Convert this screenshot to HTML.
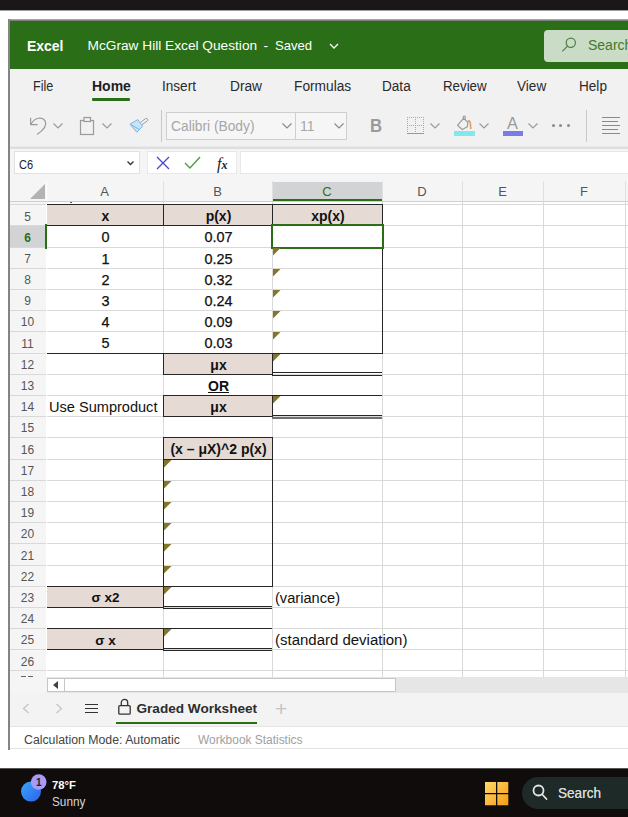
<!DOCTYPE html>
<html lang="en"><head><meta charset="utf-8"><title>Excel</title>
<style>
html,body{margin:0;padding:0;}
body{width:628px;height:817px;position:relative;overflow:hidden;background:#fff;font-family:"Liberation Sans",sans-serif;color:#222;}
.a{position:absolute;}
.t{position:absolute;white-space:nowrap;line-height:1;transform-origin:0 0;}
.c{position:absolute;white-space:nowrap;line-height:1;text-align:center;}
</style></head><body>

<div class="a" style="left:0px;top:0px;width:628px;height:10px;background:#1b1718;"></div>
<div class="a" style="left:0px;top:10px;width:628px;height:1px;background:#a3a1a2;"></div>
<div class="a" style="left:8px;top:19px;width:620px;height:731px;background:#858385;"></div>
<div class="a" style="left:10px;top:21px;width:618px;height:729px;background:#fff;"></div>
<div class="a" style="left:10px;top:21px;width:618px;height:48px;background:#2a6f17;"></div>
<div class="a" style="left:10px;top:19px;width:618px;height:1px;background:#a6a6a6;"></div>
<div class="a" style="left:10px;top:20px;width:618px;height:1px;background:#7d807b;"></div>
<div class="t" style="left:26.5px;top:38px;font-size:15.5px;color:#fff;font-weight:bold;transform:scaleX(0.9);">Excel</div>
<div class="t" style="left:87.5px;top:39px;font-size:13.7px;color:#fff;">McGraw Hill Excel Question</div>
<div class="t" style="left:263.5px;top:39px;font-size:13.7px;color:#fff;">-</div>
<div class="t" style="left:275px;top:39px;font-size:13.5px;color:#fff;transform:scaleX(0.97);">Saved</div>
<svg class="a" style="left:328px;top:42px" width="12" height="8" viewBox="0 0 12 8"><path d="M2 2 L6 6 L10 2" fill="none" stroke="#fff" stroke-width="1.3"/></svg>
<div class="a" style="left:543.5px;top:29.5px;width:95px;height:32px;background:#cbdcc6;border-radius:4px;"></div>
<svg class="a" style="left:560px;top:36px" width="18" height="18" viewBox="0 0 18 18"><circle cx="10.8" cy="6.8" r="4.6" fill="none" stroke="#4f7d40" stroke-width="1.2"/><path d="M7.5 10.2 L2.3 15.4" stroke="#4f7d40" stroke-width="1.2"/></svg>
<div class="t" style="left:588px;top:38px;font-size:14px;color:#3f7a2a;">Search</div>
<div class="a" style="left:10px;top:69px;width:618px;height:80px;background:#f1f1f2;"></div>
<div class="t" style="left:33px;top:79px;font-size:14px;color:#2a2a2a;transform:scaleX(0.9);">File</div>
<div class="t" style="left:92px;top:79px;font-size:14px;color:#1e1e1e;font-weight:bold;">Home</div>
<div class="t" style="left:162px;top:79px;font-size:14px;color:#2a2a2a;transform:scaleX(0.97);">Insert</div>
<div class="t" style="left:229.5px;top:79px;font-size:14px;color:#2a2a2a;transform:scaleX(0.98);">Draw</div>
<div class="t" style="left:293.5px;top:79px;font-size:14px;color:#2a2a2a;transform:scaleX(0.98);">Formulas</div>
<div class="t" style="left:382px;top:79px;font-size:14px;color:#2a2a2a;transform:scaleX(0.97);">Data</div>
<div class="t" style="left:443px;top:79px;font-size:14px;color:#2a2a2a;transform:scaleX(0.95);">Review</div>
<div class="t" style="left:517px;top:79px;font-size:14px;color:#2a2a2a;transform:scaleX(0.97);">View</div>
<div class="t" style="left:579px;top:79px;font-size:14px;color:#2a2a2a;transform:scaleX(0.97);">Help</div>
<div class="a" style="left:92px;top:97.5px;width:38px;height:3px;background:#2a6f17;border-radius:1px;"></div>
<svg class="a" style="left:28px;top:114px" width="22" height="24" viewBox="0 0 22 24"><path d="M2.6 3.8 L2.6 10.6 L9.6 10.6" fill="none" stroke="#9a9a9a" stroke-width="1.2"/><path d="M3 10.2 C6.5 3.4 14.5 2 17.3 7.4 C19.5 12 14 17 9 20.5" fill="none" stroke="#9a9a9a" stroke-width="1.2"/></svg>
<svg class="a" style="left:52px;top:122px" width="12" height="8" viewBox="0 0 12 8"><path d="M1.5 1.5 L6 6 L10.5 1.5" fill="none" stroke="#9a9a9a" stroke-width="1.2"/></svg>
<svg class="a" style="left:78px;top:115px" width="18" height="22" viewBox="0 0 18 22"><rect x="2.5" y="5.5" width="13" height="14" fill="none" stroke="#9a9a9a" stroke-width="1.2"/><rect x="6" y="2.5" width="6.5" height="4" fill="#f1f1f2" stroke="#9a9a9a" stroke-width="1.2"/></svg>
<svg class="a" style="left:101px;top:122px" width="12" height="8" viewBox="0 0 12 8"><path d="M1.5 1.5 L6 6 L10.5 1.5" fill="none" stroke="#9a9a9a" stroke-width="1.2"/></svg>
<svg class="a" style="left:124.5px;top:116px" width="26" height="24" viewBox="0 0 26 24"><path d="M5 8.2 L12.8 3.6 L17.6 10.4 L11.8 16.2 Z" fill="#c9e4f6" stroke="#74b6e4" stroke-width="1" stroke-linejoin="round"/><path d="M5 8.2 L14.5 13.5" stroke="#74b6e4" stroke-width="1"/><path d="M15.6 6.4 L20.6 2.6 Q22 2 22.6 3.2 Q23 4.4 22 5.2 L17 8.6" fill="#f1f1f2" stroke="#9a9a9a" stroke-width="1"/></svg>
<div class="a" style="left:161px;top:110px;width:1px;height:32px;background:#c8c8c8;"></div>
<div class="a" style="left:166px;top:112px;width:181px;height:28px;background:#f6f6f6;border:1px solid #cfcfcf;box-sizing:border-box;"></div>
<div class="a" style="left:295px;top:112px;width:1px;height:28px;background:#cfcfcf;"></div>
<div class="t" style="left:171px;top:119px;font-size:14px;color:#a6a6a6;transform:scaleX(0.985);">Calibri (Body)</div>
<svg class="a" style="left:281px;top:122px" width="12" height="8" viewBox="0 0 12 8"><path d="M1.5 1.5 L6 6 L10.5 1.5" fill="none" stroke="#8a8a8a" stroke-width="1.2"/></svg>
<div class="t" style="left:300px;top:119px;font-size:14px;color:#a6a6a6;">11</div>
<svg class="a" style="left:333px;top:122px" width="12" height="8" viewBox="0 0 12 8"><path d="M1.5 1.5 L6 6 L10.5 1.5" fill="none" stroke="#8a8a8a" stroke-width="1.2"/></svg>
<div class="t" style="left:369.5px;top:116px;font-size:19px;color:#9a9a9a;font-weight:bold;transform:scaleX(0.88);">B</div>
<svg class="a" style="left:406px;top:116px" width="19" height="19" viewBox="0 0 19 19" shape-rendering="crispEdges"><path d="M1.5 1 V17 M9.5 1 V17 M17.5 1 V17 M1 1.5 H18 M1 9.5 H18" stroke="#a8a8a8" stroke-width="1" stroke-dasharray="1 1" fill="none"/><path d="M1 17.5 H18" stroke="#9a9a9a" stroke-width="1.4"/></svg>
<svg class="a" style="left:429px;top:122px" width="12" height="8" viewBox="0 0 12 8"><path d="M1.5 1.5 L6 6 L10.5 1.5" fill="none" stroke="#9a9a9a" stroke-width="1.2"/></svg>
<svg class="a" style="left:445px;top:105px" width="40" height="30" viewBox="445 105 40 30"><path d="M457.6 125.2 L463.6 118.4 L467.8 122.4 L467.3 126.8 L462.3 129.6 Z" fill="none" stroke="#9a9a9a" stroke-width="1.2" stroke-linejoin="round"/><path d="M463.2 118.6 V116.6 Q464.2 115.6 465.2 116.6 V119.8" fill="none" stroke="#9a9a9a" stroke-width="1.1"/><path d="M467.6 121.6 Q469.8 119.6 470.3 123 L470.8 129" fill="none" stroke="#d8a066" stroke-width="1.6"/></svg>
<div class="a" style="left:454.2px;top:131.3px;width:20.6px;height:4.3px;background:#7fe9ee;"></div>
<svg class="a" style="left:478px;top:122px" width="12" height="8" viewBox="0 0 12 8"><path d="M1.5 1.5 L6 6 L10.5 1.5" fill="none" stroke="#9a9a9a" stroke-width="1.2"/></svg>
<div class="t" style="left:507.3px;top:114.5px;font-size:17.2px;color:#9a9a9a;transform:scaleX(0.95);">A</div>
<div class="a" style="left:503px;top:131.3px;width:20px;height:4.3px;background:#7b7be6;"></div>
<svg class="a" style="left:527px;top:122px" width="12" height="8" viewBox="0 0 12 8"><path d="M1.5 1.5 L6 6 L10.5 1.5" fill="none" stroke="#9a9a9a" stroke-width="1.2"/></svg>
<div class="a" style="left:552.0px;top:124px;width:3px;height:3px;background:#8a8a8a;border-radius:2px;"></div>
<div class="a" style="left:559.3px;top:124px;width:3px;height:3px;background:#8a8a8a;border-radius:2px;"></div>
<div class="a" style="left:566.6px;top:124px;width:3px;height:3px;background:#8a8a8a;border-radius:2px;"></div>
<div class="a" style="left:586px;top:110px;width:1px;height:32px;background:#c8c8c8;"></div>
<div class="a" style="left:602px;top:117px;width:18px;height:1px;background:#8a8a8a;"></div>
<div class="a" style="left:602px;top:121px;width:16px;height:1px;background:#8a8a8a;"></div>
<div class="a" style="left:602px;top:125px;width:18px;height:1px;background:#8a8a8a;"></div>
<div class="a" style="left:602px;top:129px;width:16px;height:1px;background:#8a8a8a;"></div>
<div class="a" style="left:602px;top:133px;width:18px;height:1px;background:#8a8a8a;"></div>
<div class="a" style="left:10px;top:145.5px;width:618px;height:1.5px;background:#e9e9e9;"></div>
<div class="a" style="left:10px;top:147px;width:618px;height:1.5px;background:#dedede;"></div>
<div class="a" style="left:10px;top:148.5px;width:618px;height:34px;background:#f5f5f5;"></div>
<div class="a" style="left:14px;top:150.5px;width:126px;height:23.5px;background:#fff;border:1px solid #e1e1e1;box-sizing:border-box;"></div>
<div class="t" style="left:19px;top:158.5px;font-size:12px;color:#222;transform:scaleX(0.92);">C6</div>
<svg class="a" style="left:126px;top:160px" width="9" height="6" viewBox="0 0 9 6"><path d="M1.5 1.5 L4.5 4.5 L7.5 1.5" fill="none" stroke="#333" stroke-width="1.3"/></svg>
<div class="a" style="left:147px;top:150.5px;width:89.5px;height:23.5px;background:#fff;border:1px solid #e8e8e8;box-sizing:border-box;"></div>
<svg class="a" style="left:156px;top:156px" width="14" height="14" viewBox="0 0 14 14"><path d="M1 1 L13 13 M13 1 L1 13" stroke="#4a46c8" stroke-width="1.3"/></svg>
<svg class="a" style="left:184px;top:156px" width="17" height="13" viewBox="0 0 17 13"><path d="M1 7 L6 12 L16 1" fill="none" stroke="#4a9a3c" stroke-width="1.3"/></svg>
<div class="t" style="left:217px;top:155.5px;font-size:16px;font-style:italic;font-family:'Liberation Serif',serif;color:#222;">f<span style="font-size:12px;font-weight:bold;">x</span></div>
<div class="a" style="left:240px;top:150.5px;width:390px;height:23.5px;background:#fff;border:1px solid #e8e8e8;box-sizing:border-box;"></div>
<div class="a" style="left:10px;top:178px;width:618px;height:499px;background:#fff;"></div>
<div class="a" style="left:10px;top:178px;width:618px;height:24px;background:#f5f5f5;"></div>
<div class="a" style="left:10px;top:201px;width:36px;height:476px;background:#f5f5f5;"></div>
<div class="a" style="left:272px;top:182px;width:110px;height:18px;background:#d2d3d5;"></div>
<div class="a" style="left:272px;top:199px;width:111px;height:2.5px;background:#2a6f17;"></div>
<div class="c" style="left:84.5px;width:40px;top:185px;font-size:13px;color:#555;">A</div>
<div class="c" style="left:197.5px;width:40px;top:185px;font-size:13px;color:#555;">B</div>
<div class="c" style="left:307.0px;width:40px;top:185px;font-size:13px;color:#2a6f17;">C</div>
<div class="c" style="left:402.0px;width:40px;top:185px;font-size:13px;color:#555;">D</div>
<div class="c" style="left:482.5px;width:40px;top:185px;font-size:13px;color:#555;">E</div>
<div class="c" style="left:564.0px;width:40px;top:185px;font-size:13px;color:#555;">F</div>
<div class="a" style="left:46px;top:181px;width:1px;height:20px;background:#fff;"></div>
<div class="a" style="left:163px;top:181px;width:1px;height:20px;background:#e0e0e0;"></div>
<div class="a" style="left:272px;top:181px;width:1px;height:20px;background:#e0e0e0;"></div>
<div class="a" style="left:382px;top:181px;width:1px;height:20px;background:#e0e0e0;"></div>
<div class="a" style="left:462px;top:181px;width:1px;height:20px;background:#e0e0e0;"></div>
<div class="a" style="left:543px;top:181px;width:1px;height:20px;background:#e0e0e0;"></div>
<div class="a" style="left:625px;top:181px;width:1px;height:20px;background:#e0e0e0;"></div>
<div class="a" style="left:10px;top:201px;width:618px;height:1px;background:#cfcfcf;"></div>
<svg class="a" style="left:29px;top:183px" width="17" height="17" viewBox="0 0 17 17"><path d="M16 1 V16 H1 Z" fill="#b3b3b3"/></svg>
<div class="a" style="left:47px;top:202px;width:581px;height:475px;background:#fff;"></div>
<div class="a" style="left:10px;top:204px;width:618px;height:1px;background:#d9d9d9;"></div>
<div class="a" style="left:10px;top:225px;width:618px;height:1px;background:#d9d9d9;"></div>
<div class="a" style="left:10px;top:247px;width:618px;height:1px;background:#d9d9d9;"></div>
<div class="a" style="left:10px;top:268px;width:618px;height:1px;background:#d9d9d9;"></div>
<div class="a" style="left:10px;top:289px;width:618px;height:1px;background:#d9d9d9;"></div>
<div class="a" style="left:10px;top:310px;width:618px;height:1px;background:#d9d9d9;"></div>
<div class="a" style="left:10px;top:331px;width:618px;height:1px;background:#d9d9d9;"></div>
<div class="a" style="left:10px;top:353px;width:618px;height:1px;background:#d9d9d9;"></div>
<div class="a" style="left:10px;top:374px;width:618px;height:1px;background:#d9d9d9;"></div>
<div class="a" style="left:10px;top:395px;width:618px;height:1px;background:#d9d9d9;"></div>
<div class="a" style="left:10px;top:416px;width:618px;height:1px;background:#d9d9d9;"></div>
<div class="a" style="left:10px;top:437px;width:618px;height:1px;background:#d9d9d9;"></div>
<div class="a" style="left:10px;top:459px;width:618px;height:1px;background:#d9d9d9;"></div>
<div class="a" style="left:10px;top:480px;width:618px;height:1px;background:#d9d9d9;"></div>
<div class="a" style="left:10px;top:501px;width:618px;height:1px;background:#d9d9d9;"></div>
<div class="a" style="left:10px;top:522px;width:618px;height:1px;background:#d9d9d9;"></div>
<div class="a" style="left:10px;top:543px;width:618px;height:1px;background:#d9d9d9;"></div>
<div class="a" style="left:10px;top:565px;width:618px;height:1px;background:#d9d9d9;"></div>
<div class="a" style="left:10px;top:586px;width:618px;height:1px;background:#d9d9d9;"></div>
<div class="a" style="left:10px;top:607px;width:618px;height:1px;background:#d9d9d9;"></div>
<div class="a" style="left:10px;top:628px;width:618px;height:1px;background:#d9d9d9;"></div>
<div class="a" style="left:10px;top:649px;width:618px;height:1px;background:#d9d9d9;"></div>
<div class="a" style="left:10px;top:670px;width:618px;height:1px;background:#d9d9d9;"></div>
<div class="a" style="left:46px;top:202px;width:1px;height:475px;background:#fff;"></div>
<div class="a" style="left:163px;top:202px;width:1px;height:475px;background:#d9d9d9;"></div>
<div class="a" style="left:272px;top:202px;width:1px;height:475px;background:#d9d9d9;"></div>
<div class="a" style="left:382px;top:202px;width:1px;height:475px;background:#d9d9d9;"></div>
<div class="a" style="left:462px;top:202px;width:1px;height:475px;background:#d9d9d9;"></div>
<div class="a" style="left:543px;top:202px;width:1px;height:475px;background:#d9d9d9;"></div>
<div class="a" style="left:625px;top:202px;width:1px;height:475px;background:#d9d9d9;"></div>
<div class="a" style="left:10px;top:226px;width:36px;height:21px;background:#d2d3d5;"></div>
<div class="a" style="left:45.3px;top:224px;width:2.1px;height:25px;background:#2a6f17;"></div>
<div class="c" style="left:9.5px;width:36px;top:210.5px;font-size:12px;color:#555;">5</div>
<div class="c" style="left:9.5px;width:36px;top:231.7px;font-size:12px;color:#2a6f17;font-weight:bold;">6</div>
<div class="c" style="left:9.5px;width:36px;top:252.9px;font-size:12px;color:#555;">7</div>
<div class="c" style="left:9.5px;width:36px;top:274.1px;font-size:12px;color:#555;">8</div>
<div class="c" style="left:9.5px;width:36px;top:295.3px;font-size:12px;color:#555;">9</div>
<div class="c" style="left:9.5px;width:36px;top:316.4px;font-size:12px;color:#555;">10</div>
<div class="c" style="left:9.5px;width:36px;top:337.6px;font-size:12px;color:#555;">11</div>
<div class="c" style="left:9.5px;width:36px;top:358.8px;font-size:12px;color:#555;">12</div>
<div class="c" style="left:9.5px;width:36px;top:380.0px;font-size:12px;color:#555;">13</div>
<div class="c" style="left:9.5px;width:36px;top:401.2px;font-size:12px;color:#555;">14</div>
<div class="c" style="left:9.5px;width:36px;top:422.4px;font-size:12px;color:#555;">15</div>
<div class="c" style="left:9.5px;width:36px;top:443.6px;font-size:12px;color:#555;">16</div>
<div class="c" style="left:9.5px;width:36px;top:464.8px;font-size:12px;color:#555;">17</div>
<div class="c" style="left:9.5px;width:36px;top:486.0px;font-size:12px;color:#555;">18</div>
<div class="c" style="left:9.5px;width:36px;top:507.2px;font-size:12px;color:#555;">19</div>
<div class="c" style="left:9.5px;width:36px;top:528.4px;font-size:12px;color:#555;">20</div>
<div class="c" style="left:9.5px;width:36px;top:549.5px;font-size:12px;color:#555;">21</div>
<div class="c" style="left:9.5px;width:36px;top:570.7px;font-size:12px;color:#555;">22</div>
<div class="c" style="left:9.5px;width:36px;top:591.9px;font-size:12px;color:#555;">23</div>
<div class="c" style="left:9.5px;width:36px;top:613.1px;font-size:12px;color:#555;">24</div>
<div class="c" style="left:9.5px;width:36px;top:634.3px;font-size:12px;color:#555;">25</div>
<div class="c" style="left:9.5px;width:36px;top:655.5px;font-size:12px;color:#555;">26</div>
<div class="a" style="left:21px;top:676px;width:5px;height:1px;background:#666;"></div>
<div class="a" style="left:28px;top:676px;width:5px;height:1px;background:#666;"></div>
<div class="a" style="left:70.3px;top:202px;width:1.5px;height:1px;background:#555;"></div>
<div class="a" style="left:47px;top:204px;width:116px;height:21px;background:#e6dad5;"></div>
<div class="a" style="left:163px;top:204px;width:109px;height:21px;background:#e6dad5;"></div>
<div class="a" style="left:272px;top:204px;width:110px;height:21px;background:#e6dad5;"></div>
<div class="a" style="left:163px;top:353px;width:109px;height:21px;background:#e6dad5;"></div>
<div class="a" style="left:163px;top:395px;width:109px;height:21px;background:#e6dad5;"></div>
<div class="a" style="left:163px;top:437px;width:109px;height:22px;background:#e6dad5;"></div>
<div class="a" style="left:47px;top:586px;width:116px;height:21px;background:#e6dad5;"></div>
<div class="a" style="left:47px;top:628px;width:116px;height:21px;background:#e6dad5;"></div>
<div class="a" style="left:47px;top:204px;width:117px;height:1px;background:#262626;"></div>
<div class="a" style="left:47px;top:225px;width:117px;height:1px;background:#262626;"></div>
<div class="a" style="left:163px;top:204px;width:1px;height:22px;background:#262626;"></div>
<div class="a" style="left:163px;top:204px;width:110px;height:1px;background:#262626;"></div>
<div class="a" style="left:163px;top:225px;width:110px;height:1px;background:#262626;"></div>
<div class="a" style="left:163px;top:204px;width:1px;height:21px;background:#262626;"></div>
<div class="a" style="left:272px;top:204px;width:1px;height:22px;background:#262626;"></div>
<div class="a" style="left:272px;top:204px;width:111px;height:1px;background:#262626;"></div>
<div class="a" style="left:272px;top:225px;width:111px;height:1px;background:#262626;"></div>
<div class="a" style="left:272px;top:204px;width:1px;height:21px;background:#262626;"></div>
<div class="a" style="left:382px;top:204px;width:1px;height:22px;background:#262626;"></div>
<div class="a" style="left:382px;top:225px;width:1px;height:129px;background:#262626;"></div>
<div class="a" style="left:47px;top:353px;width:336px;height:1px;background:#262626;"></div>
<div class="a" style="left:163px;top:353px;width:110px;height:1px;background:#262626;"></div>
<div class="a" style="left:163px;top:374px;width:110px;height:1px;background:#262626;"></div>
<div class="a" style="left:163px;top:353px;width:1px;height:21px;background:#262626;"></div>
<div class="a" style="left:272px;top:353px;width:1px;height:22px;background:#262626;"></div>
<div class="a" style="left:272px;top:372px;width:110px;height:1px;background:#262626;"></div>
<div class="a" style="left:272px;top:375px;width:110px;height:1px;background:#262626;"></div>
<div class="a" style="left:163px;top:395px;width:110px;height:1px;background:#262626;"></div>
<div class="a" style="left:163px;top:416px;width:110px;height:1px;background:#262626;"></div>
<div class="a" style="left:163px;top:395px;width:1px;height:21px;background:#262626;"></div>
<div class="a" style="left:272px;top:395px;width:1px;height:22px;background:#262626;"></div>
<div class="a" style="left:272px;top:395px;width:110px;height:1px;background:#262626;"></div>
<div class="a" style="left:272px;top:415px;width:110px;height:1px;background:#262626;"></div>
<div class="a" style="left:272px;top:417px;width:110px;height:2px;background:#707070;"></div>
<div class="a" style="left:163px;top:437px;width:110px;height:1px;background:#262626;"></div>
<div class="a" style="left:163px;top:459px;width:110px;height:1px;background:#262626;"></div>
<div class="a" style="left:163px;top:437px;width:1px;height:22px;background:#262626;"></div>
<div class="a" style="left:272px;top:437px;width:1px;height:23px;background:#262626;"></div>
<div class="a" style="left:163px;top:459px;width:1px;height:127px;background:#262626;"></div>
<div class="a" style="left:272px;top:459px;width:1px;height:128px;background:#262626;"></div>
<div class="a" style="left:163px;top:586px;width:110px;height:1px;background:#262626;"></div>
<div class="a" style="left:47px;top:586px;width:116px;height:1px;background:#262626;"></div>
<div class="a" style="left:47px;top:607px;width:116px;height:1px;background:#262626;"></div>
<div class="a" style="left:163px;top:586px;width:1px;height:22px;background:#262626;"></div>
<div class="a" style="left:163px;top:606px;width:109px;height:1px;background:#262626;"></div>
<div class="a" style="left:163px;top:608px;width:109px;height:1px;background:#262626;"></div>
<div class="a" style="left:47px;top:628px;width:116px;height:1px;background:#262626;"></div>
<div class="a" style="left:47px;top:649px;width:116px;height:1px;background:#262626;"></div>
<div class="a" style="left:163px;top:628px;width:1px;height:22px;background:#262626;"></div>
<div class="a" style="left:163px;top:628px;width:109px;height:1px;background:#262626;"></div>
<div class="a" style="left:163px;top:648px;width:109px;height:1px;background:#262626;"></div>
<div class="a" style="left:163px;top:650px;width:109px;height:1px;background:#262626;"></div>
<div class="a" style="left:271px;top:224px;width:113px;height:25px;border:2px solid #2a6f17;box-sizing:border-box;background:#fff;"></div>
<svg class="a" style="left:273px;top:248px" width="8" height="8" viewBox="0 0 8 8"><path d="M0 0 H7.5 L0 7.5 Z" fill="#85752a"/></svg>
<svg class="a" style="left:273px;top:269px" width="8" height="8" viewBox="0 0 8 8"><path d="M0 0 H7.5 L0 7.5 Z" fill="#85752a"/></svg>
<svg class="a" style="left:273px;top:290px" width="8" height="8" viewBox="0 0 8 8"><path d="M0 0 H7.5 L0 7.5 Z" fill="#85752a"/></svg>
<svg class="a" style="left:273px;top:311px" width="8" height="8" viewBox="0 0 8 8"><path d="M0 0 H7.5 L0 7.5 Z" fill="#85752a"/></svg>
<svg class="a" style="left:273px;top:332px" width="8" height="8" viewBox="0 0 8 8"><path d="M0 0 H7.5 L0 7.5 Z" fill="#85752a"/></svg>
<svg class="a" style="left:273px;top:354px" width="8" height="8" viewBox="0 0 8 8"><path d="M0 0 H7.5 L0 7.5 Z" fill="#85752a"/></svg>
<svg class="a" style="left:273px;top:396px" width="8" height="8" viewBox="0 0 8 8"><path d="M0 0 H7.5 L0 7.5 Z" fill="#85752a"/></svg>
<svg class="a" style="left:164px;top:460px" width="8" height="8" viewBox="0 0 8 8"><path d="M0 0 H7.5 L0 7.5 Z" fill="#85752a"/></svg>
<svg class="a" style="left:164px;top:481px" width="8" height="8" viewBox="0 0 8 8"><path d="M0 0 H7.5 L0 7.5 Z" fill="#85752a"/></svg>
<svg class="a" style="left:164px;top:502px" width="8" height="8" viewBox="0 0 8 8"><path d="M0 0 H7.5 L0 7.5 Z" fill="#85752a"/></svg>
<svg class="a" style="left:164px;top:523px" width="8" height="8" viewBox="0 0 8 8"><path d="M0 0 H7.5 L0 7.5 Z" fill="#85752a"/></svg>
<svg class="a" style="left:164px;top:544px" width="8" height="8" viewBox="0 0 8 8"><path d="M0 0 H7.5 L0 7.5 Z" fill="#85752a"/></svg>
<svg class="a" style="left:164px;top:566px" width="8" height="8" viewBox="0 0 8 8"><path d="M0 0 H7.5 L0 7.5 Z" fill="#85752a"/></svg>
<svg class="a" style="left:164px;top:587px" width="8" height="8" viewBox="0 0 8 8"><path d="M0 0 H7.5 L0 7.5 Z" fill="#85752a"/></svg>
<svg class="a" style="left:164px;top:629px" width="8" height="8" viewBox="0 0 8 8"><path d="M0 0 H7.5 L0 7.5 Z" fill="#85752a"/></svg>
<div class="c" style="left:17px;width:177px;top:209.4px;font-size:14px;color:#111;font-weight:bold;">x</div>
<div class="c" style="left:134px;width:169px;top:209.4px;font-size:14px;color:#111;font-weight:bold;">p(x)</div>
<div class="c" style="left:243px;width:170px;top:209.4px;font-size:14px;color:#111;font-weight:bold;">xp(x)</div>
<div class="c" style="left:17px;width:177px;top:230.3px;font-size:14px;color:#111;-webkit-text-stroke:0.25px #111;transform:scaleX(1.03);">0</div>
<div class="c" style="left:134px;width:169px;top:230.3px;font-size:14px;color:#111;-webkit-text-stroke:0.25px #111;transform:scaleX(1.03);">0.07</div>
<div class="c" style="left:17px;width:177px;top:251.5px;font-size:14px;color:#111;-webkit-text-stroke:0.25px #111;transform:scaleX(1.03);">1</div>
<div class="c" style="left:134px;width:169px;top:251.5px;font-size:14px;color:#111;-webkit-text-stroke:0.25px #111;transform:scaleX(1.03);">0.25</div>
<div class="c" style="left:17px;width:177px;top:272.7px;font-size:14px;color:#111;-webkit-text-stroke:0.25px #111;transform:scaleX(1.03);">2</div>
<div class="c" style="left:134px;width:169px;top:272.7px;font-size:14px;color:#111;-webkit-text-stroke:0.25px #111;transform:scaleX(1.03);">0.32</div>
<div class="c" style="left:17px;width:177px;top:293.9px;font-size:14px;color:#111;-webkit-text-stroke:0.25px #111;transform:scaleX(1.03);">3</div>
<div class="c" style="left:134px;width:169px;top:293.9px;font-size:14px;color:#111;-webkit-text-stroke:0.25px #111;transform:scaleX(1.03);">0.24</div>
<div class="c" style="left:17px;width:177px;top:315.1px;font-size:14px;color:#111;-webkit-text-stroke:0.25px #111;transform:scaleX(1.03);">4</div>
<div class="c" style="left:134px;width:169px;top:315.1px;font-size:14px;color:#111;-webkit-text-stroke:0.25px #111;transform:scaleX(1.03);">0.09</div>
<div class="c" style="left:17px;width:177px;top:336.2px;font-size:14px;color:#111;-webkit-text-stroke:0.25px #111;transform:scaleX(1.03);">5</div>
<div class="c" style="left:134px;width:169px;top:336.2px;font-size:14px;color:#111;-webkit-text-stroke:0.25px #111;transform:scaleX(1.03);">0.03</div>
<div class="c" style="left:134px;width:169px;top:357.9px;font-size:14px;color:#111;font-weight:bold;">&#956;x</div>
<div class="c" style="left:134px;width:169px;top:379.1px;font-size:14px;color:#111;font-weight:bold;text-decoration:underline;">OR</div>
<div class="c" style="left:134px;width:169px;top:400.3px;font-size:14px;color:#111;font-weight:bold;">&#956;x</div>
<div class="t" style="left:49px;top:400.0px;font-size:14px;color:#111;transform:scaleX(1.04);">Use Sumproduct</div>
<div class="c" style="left:134px;width:169px;top:441.9px;font-size:14px;color:#111;font-weight:bold;">(x &#8211; &#956;X)^2 p(x)</div>
<div class="c" style="left:17px;width:177px;top:591.2px;font-size:13.5px;color:#111;font-weight:bold;">&#963; x2</div>
<div class="c" style="left:17px;width:177px;top:633.6px;font-size:13.5px;color:#111;font-weight:bold;">&#963; x</div>
<div class="t" style="left:275px;top:591.0px;font-size:14px;color:#111;transform:scaleX(1.045);">(variance)</div>
<div class="t" style="left:275px;top:633.4px;font-size:14px;color:#111;transform:scaleX(1.07);">(standard deviation)</div>
<div class="a" style="left:10px;top:677px;width:618px;height:15.5px;background:#e6e6e6;"></div>
<div class="a" style="left:10px;top:677px;width:37px;height:15.5px;background:#f5f5f5;"></div>
<div class="a" style="left:47px;top:678px;width:349px;height:14px;background:#fff;border:1px solid #c6c6c6;box-sizing:border-box;"></div>
<div class="a" style="left:47px;top:678px;width:18px;height:14px;background:#fff;border:1px solid #c6c6c6;box-sizing:border-box;"></div>
<svg class="a" style="left:53px;top:681px" width="6" height="8" viewBox="0 0 6 8"><path d="M5 0 V8 L0 4 Z" fill="#444"/></svg>
<div class="a" style="left:10px;top:692.5px;width:618px;height:33px;background:#f3f3f3;"></div>
<svg class="a" style="left:22px;top:702.5px" width="8" height="11" viewBox="0 0 8 11"><path d="M6.5 1 L1.5 5.5 L6.5 10" fill="none" stroke="#c4c4c4" stroke-width="1.2"/></svg>
<svg class="a" style="left:55px;top:702.5px" width="8" height="11" viewBox="0 0 8 11"><path d="M1.5 1 L6.5 5.5 L1.5 10" fill="none" stroke="#c4c4c4" stroke-width="1.2"/></svg>
<div class="a" style="left:85px;top:703.5px;width:12.5px;height:1.2px;background:#333;"></div>
<div class="a" style="left:85px;top:707.7px;width:12.5px;height:1.2px;background:#333;"></div>
<div class="a" style="left:85px;top:711.9px;width:12.5px;height:1.2px;background:#333;"></div>
<svg class="a" style="left:117px;top:698px" width="15" height="18" viewBox="0 0 15 18"><rect x="1.8" y="7.6" width="11.4" height="8.6" rx="1" fill="none" stroke="#333" stroke-width="1.3"/><path d="M4.3 7.5 V4.6 A3.2 3.2 0 0 1 10.7 4.6 V7.5" fill="none" stroke="#333" stroke-width="1.3"/></svg>
<div class="t" style="left:136.5px;top:702px;font-size:13.6px;color:#2d2d2d;font-weight:bold;">Graded Worksheet</div>
<div class="a" style="left:116px;top:721.6px;width:141px;height:2.8px;background:#2a6f17;"></div>
<div class="t" style="left:275px;top:697.5px;font-size:21px;color:#c4c4c4;">+</div>
<div class="a" style="left:10px;top:725.5px;width:618px;height:1px;background:#e4e4e4;"></div>
<div class="a" style="left:10px;top:726.5px;width:618px;height:22px;background:#fff;"></div>
<div class="t" style="left:24px;top:733.5px;font-size:12.3px;color:#444;">Calculation Mode: Automatic</div>
<div class="t" style="left:198px;top:733.5px;font-size:12.3px;color:#a0a0a0;transform:scaleX(0.97);">Workbook Statistics</div>
<div class="a" style="left:10px;top:748.3px;width:618px;height:1.2px;background:#e2e2e2;"></div>
<div class="a" style="left:0px;top:750px;width:628px;height:18px;background:#fff;"></div>
<div class="a" style="left:0px;top:768px;width:628px;height:49px;background:#100c0c;"></div>
<div class="a" style="left:0px;top:767.5px;width:628px;height:1px;background:#555;"></div>
<svg class="a" style="left:18px;top:771px" width="34" height="36" viewBox="0 0 34 36"><defs><linearGradient id="wg" x1="0" y1="0" x2="1" y2="1"><stop offset="0" stop-color="#3aa6f6"/><stop offset="1" stop-color="#2c62ee"/></linearGradient></defs><circle cx="13" cy="20.6" r="10" fill="url(#wg)"/><circle cx="20.7" cy="11" r="7.8" fill="#a99bf5"/></svg>
<div class="t" style="left:36px;top:777.5px;font-size:10px;color:#222;font-weight:bold;">1</div>
<div class="t" style="left:51.5px;top:779.5px;font-size:11.8px;color:#fff;font-weight:bold;transform:scaleX(0.95);">78&#176;F</div>
<div class="t" style="left:51.5px;top:795.5px;font-size:12px;color:#d6d6d6;transform:scaleX(0.98);">Sunny</div>
<svg class="a" style="left:485px;top:781.5px" width="24" height="24" viewBox="0 0 24 24"><defs><linearGradient id="wl" x1="0" y1="0" x2="1" y2="1"><stop offset="0" stop-color="#ffd968"/><stop offset="1" stop-color="#f79a12"/></linearGradient></defs><path d="M0 0 H11 V11 H0 Z M12.3 0 H23.3 V11 H12.3 Z M0 12.3 H11 V23.3 H0 Z M12.3 12.3 H23.3 V23.3 H12.3 Z" fill="url(#wl)"/></svg>
<div class="a" style="left:521.5px;top:776.8px;width:130px;height:32px;background:#1d2a28;border-radius:16px;"></div>
<svg class="a" style="left:532px;top:783.7px" width="16" height="17" viewBox="0 0 16 17"><circle cx="6.5" cy="6.5" r="5" fill="none" stroke="#e4e4e4" stroke-width="1.8"/><path d="M10.3 10.5 L14.5 15" stroke="#e4e4e4" stroke-width="1.8" stroke-linecap="round"/></svg>
<div class="t" style="left:558px;top:785.7px;font-size:14px;color:#d8d8d8;transform:scaleX(0.97);text-shadow:0 0 .4px #d8d8d8;">Search</div>
</body></html>
